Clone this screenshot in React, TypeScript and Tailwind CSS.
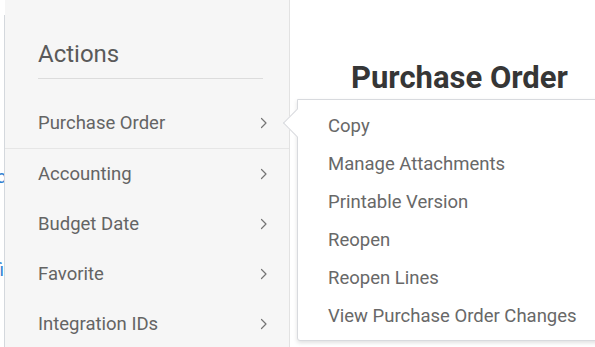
import React from "react";

const actions = ["Purchase Order", "Accounting", "Budget Date", "Favorite", "Integration IDs"];

const subActions = [
  "Copy",
  "Manage Attachments",
  "Printable Version",
  "Reopen",
  "Reopen Lines",
  "View Purchase Order Changes",
];

function Chevron() {
  return (
    <svg width="8" height="12" viewBox="0 0 8 12" fill="none" className="shrink-0">
      <polyline points="1.5,1.5 6,6 1.5,10.5" stroke="#757575" strokeWidth="1.2" strokeLinecap="round" strokeLinejoin="round" />
    </svg>
  );
}

export default function App() {
  return (
    <div className="relative flex w-[595px] h-[347px] overflow-hidden bg-white font-['Roboto','Liberation_Sans',sans-serif]">
      {/* page behind the menu, mostly hidden */}
      <div className="flex flex-col w-[5px] shrink-0">
        <div className="h-[15px]" />
        <div className="flex-1 border-r border-[#d4d8dd] overflow-hidden">
          <div className="mt-[152px] ml-[-8px] text-[18px] leading-[20px] text-[#2f7fd1] whitespace-nowrap">ic</div>
          <div className="mt-[73px] ml-[-6px] text-[18px] leading-[20px] text-[#2f7fd1] whitespace-nowrap">fi</div>
        </div>
      </div>

      {/* actions panel */}
      <div className="w-[285px] shrink-0 bg-[#f6f6f6] border-r border-[#e2e2e2]">
        <div className="ml-[33px] mr-[26px] pt-[40px] pb-[10px] border-b border-[#dcdcdc]">
          <div className="text-[24px] leading-[28px] text-[#5a5a5a]">Actions</div>
        </div>
        <div className="mt-[19px]">
          {actions.map((a, i) => (
            <div
              key={a}
              className={
                i === 0
                  ? "flex items-center justify-between h-[51px] pl-[33px] pr-[21px] border-b border-[#e6e6e6]"
                  : "flex items-center justify-between h-[50px] pl-[33px] pr-[21px]"
              }
            >
              <span className="text-[18.5px] leading-[50px] text-[#646464]">{a}</span>
              <Chevron />
            </div>
          ))}
        </div>
      </div>

      {/* detail area */}
      <div className="flex-1 pl-[61px] pt-[63px]">
        <h1 className="text-[31px] leading-[30px] font-bold text-[#363636] whitespace-nowrap">Purchase Order</h1>
      </div>

      {/* sub-menu popover */}
      <div className="absolute left-[297px] top-[99px] right-[-12px] bg-white border border-[#d8dade] rounded-bl-[3px] shadow-[0_2px_4px_rgba(0,0,0,0.12)] pt-[7px] pb-[5px]">
        <div className="absolute left-[-11px] top-[13px] w-[20px] h-[20px] bg-white border-l border-b border-[#d8dade] rotate-45" />
        {subActions.map((s) => (
          <div key={s} className="relative h-[38px] pl-[30px] text-[18.5px] leading-[38px] text-[#686868] whitespace-nowrap">
            {s}
          </div>
        ))}
      </div>
    </div>
  );
}
